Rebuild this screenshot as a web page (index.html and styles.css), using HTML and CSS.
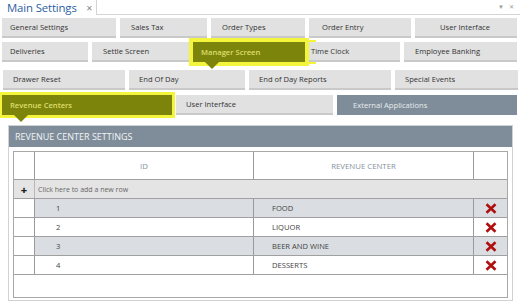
FILE: index.html
```html
<!DOCTYPE html>
<html>
<head>
<meta charset="utf-8">
<link rel="stylesheet" href="styles.css">
</head>
<body>
<div class="app">
  <div class="titlebar">
    <div class="tab"><span class="tab-title">Main Settings</span><span class="tab-close">✕</span></div>
    <div class="titlefill"><span class="tb-icon">▼</span><span class="tb-icon">✕</span></div>
  </div>
  <div class="buttons">
    <div class="row r1">
      <div class="btn">General Settings</div>
      <div class="btn">Sales Tax</div>
      <div class="btn">Order Types</div>
      <div class="btn">Order Entry</div>
      <div class="btn">User Interface</div>
    </div>
    <div class="row r2">
      <div class="btn">Deliveries</div>
      <div class="btn">Settle Screen</div>
      <div class="btn sel hl-mgr">Manager Screen</div>
      <div class="btn">Time Clock</div>
      <div class="btn">Employee Banking</div>
    </div>
    <div class="row r3">
      <div class="btn">Drawer Reset</div>
      <div class="btn">End Of Day</div>
      <div class="btn">End of Day Reports</div>
      <div class="btn">Special Events</div>
    </div>
    <div class="row r4">
      <div class="btn sel hl-rev">Revenue Centers</div>
      <div class="btn">User Interface</div>
      <div class="btn ext">External Applications</div>
    </div>
  </div>
  <div class="panel">
    <div class="panel-head">REVENUE CENTER SETTINGS</div>
    <div class="grid">
      <div class="g-row head">
        <div class="c0"></div><div class="c1">ID</div><div class="c2">REVENUE CENTER</div><div class="c3"></div>
      </div>
      <div class="g-row add">
        <div class="c0 plus">+</div><div class="add-text">Click here to add a new row</div>
      </div>
      <div class="g-row data alt">
        <div class="c0"></div><div class="c1">1</div><div class="c2">FOOD</div><div class="c3"><svg class="del" viewBox="0 0 12 11"><path d="M1.5 1.2 L10.5 9.8 M10.5 1.2 L1.5 9.8"/></svg></div>
      </div>
      <div class="g-row data">
        <div class="c0"></div><div class="c1">2</div><div class="c2">LIQUOR</div><div class="c3"><svg class="del" viewBox="0 0 12 11"><path d="M1.5 1.2 L10.5 9.8 M10.5 1.2 L1.5 9.8"/></svg></div>
      </div>
      <div class="g-row data alt">
        <div class="c0"></div><div class="c1">3</div><div class="c2">BEER AND WINE</div><div class="c3"><svg class="del" viewBox="0 0 12 11"><path d="M1.5 1.2 L10.5 9.8 M10.5 1.2 L1.5 9.8"/></svg></div>
      </div>
      <div class="g-row data">
        <div class="c0"></div><div class="c1">4</div><div class="c2">DESSERTS</div><div class="c3"><svg class="del" viewBox="0 0 12 11"><path d="M1.5 1.2 L10.5 9.8 M10.5 1.2 L1.5 9.8"/></svg></div>
      </div>
    </div>
  </div>
</div>
</body>
</html>
```
FILE: styles.css
```css
html, body { margin: 0; padding: 0; background: #fff; }
body { width: 520px; height: 304px; overflow: hidden; font-family: "Open Sans", "Noto Sans", sans-serif; }
.app { position: relative; width: 520px; height: 304px; }

.titlebar { display: flex; height: 15px; }
.tab { border-right: 1px solid #d4d4d4; display: flex; align-items: center; padding-left: 7px; box-sizing: border-box; width: 97px; white-space: nowrap; }
.tab-title { color: #2d5f9f; font-size: 11.4px; line-height: 15px; letter-spacing: -0.15px; }
.tab-close { color: #888; font-size: 8px; margin-left: 9px; }
.titlefill { flex: 1; border-bottom: 1px solid #d4d4d4; display: flex; justify-content: flex-end; align-items: center; gap: 5px; padding-right: 6px; }
.tb-icon { color: #9a9a9a; font-size: 6px; }

.buttons { padding: 2px 3px 0 2px; }
.row { display: grid; column-gap: 4px; height: 20px; }
.r1 { grid-template-columns: 114px 87px 94px 102px 102px; margin-top: 1px; }
.r2 { grid-template-columns: 86px 97px 112px 91px 113px; margin-top: 4px; }
.r3 { grid-template-columns: 122px 116px 142px 123px; margin-top: 8px; padding-left: 1px; }
.r4 { grid-template-columns: 170px 157px 180px; margin-top: 5px; }

.btn { position: relative; background: #e1e1e1; border-bottom: 2px solid #c9c9c9; box-sizing: border-box; font-size: 7.6px; color: #333; display: flex; align-items: center; padding-left: 8px; white-space: nowrap; }
.r1 .btn:nth-child(n+2), .r2 .btn:nth-child(2), .r2 .btn:nth-child(5) { padding-left: 11px; }
.r1 .btn:nth-child(5) { padding-left: 25px; }
.r1 .btn:nth-child(4) { padding-left: 13px; }
.r2 .btn:nth-child(4) { padding-left: 2px; }
.r3 .btn { padding-left: 10px; }
.r4 .btn:nth-child(2) { padding-left: 10px; }
.btn.sel { background: #7c840c; color: #dede6a; border-bottom: none; font-weight: 600; }
.btn.sel::after { content: ""; position: absolute; left: 12px; bottom: -7px; border-left: 7px solid transparent; border-right: 7px solid transparent; border-top: 7px solid #7c840c; }
.btn.ext { background: #7f8c99; color: #e8ecf0; border-bottom: none; padding-left: 16px; }

.hl-mgr { box-shadow: 0 0 0 4px #f4f43c; }
.hl-mgr::before { content: ""; position: absolute; right: -11px; top: -2px; width: 8px; height: 24px; background: #f4f43c; }
.hl-rev { box-shadow: 0 0 0 3px #f4f43c; }

.panel { margin: 10px 7px 0 8px; border: 1px solid #cfd3d6; height: 176px; box-sizing: border-box; }
.panel-head { background: #7f8c99; color: #f2f4f6; font-size: 9px; height: 21px; line-height: 21px; padding-left: 6px; }
.grid { margin: 4px 4px 0 4px; border: 1px solid #a8a8a8; height: 147px; box-sizing: border-box; }
.g-row { display: grid; grid-template-columns: 20px 219px 220px 1fr; height: 19px; border-bottom: 1px solid #a0a0a0; box-sizing: border-box; font-size: 7.6px; color: #444; }
.g-row > div { display: flex; align-items: center; }
.g-row .c1, .g-row .c2 { border-left: 1px solid #9a9a9a; }
.g-row .c3 { border-left: 1px solid #9a9a9a; justify-content: center; }
.head { height: 28px; background: #fff; }
.head .c1, .head .c2 { justify-content: center; color: #8592a0; font-size: 7.8px; }
.add { grid-template-columns: 20px 1fr; background: #e4e4e4; }
.add .add-text { border-left: 1px solid #b8b8b8; padding-left: 3px; color: #666; font-size: 7px; }
.plus { justify-content: center; font-weight: 800; font-size: 11px; color: #222; }
.data .c1 { padding-left: 21px; }
.data .c2 { padding-left: 18px; }
.data.alt { background: #dadee3; }
.data.alt .c0 { background: #fff; }
.del { width: 12px; height: 11px; fill: none; stroke: #b00f0f; stroke-width: 2.6; stroke-linecap: butt; }
```
